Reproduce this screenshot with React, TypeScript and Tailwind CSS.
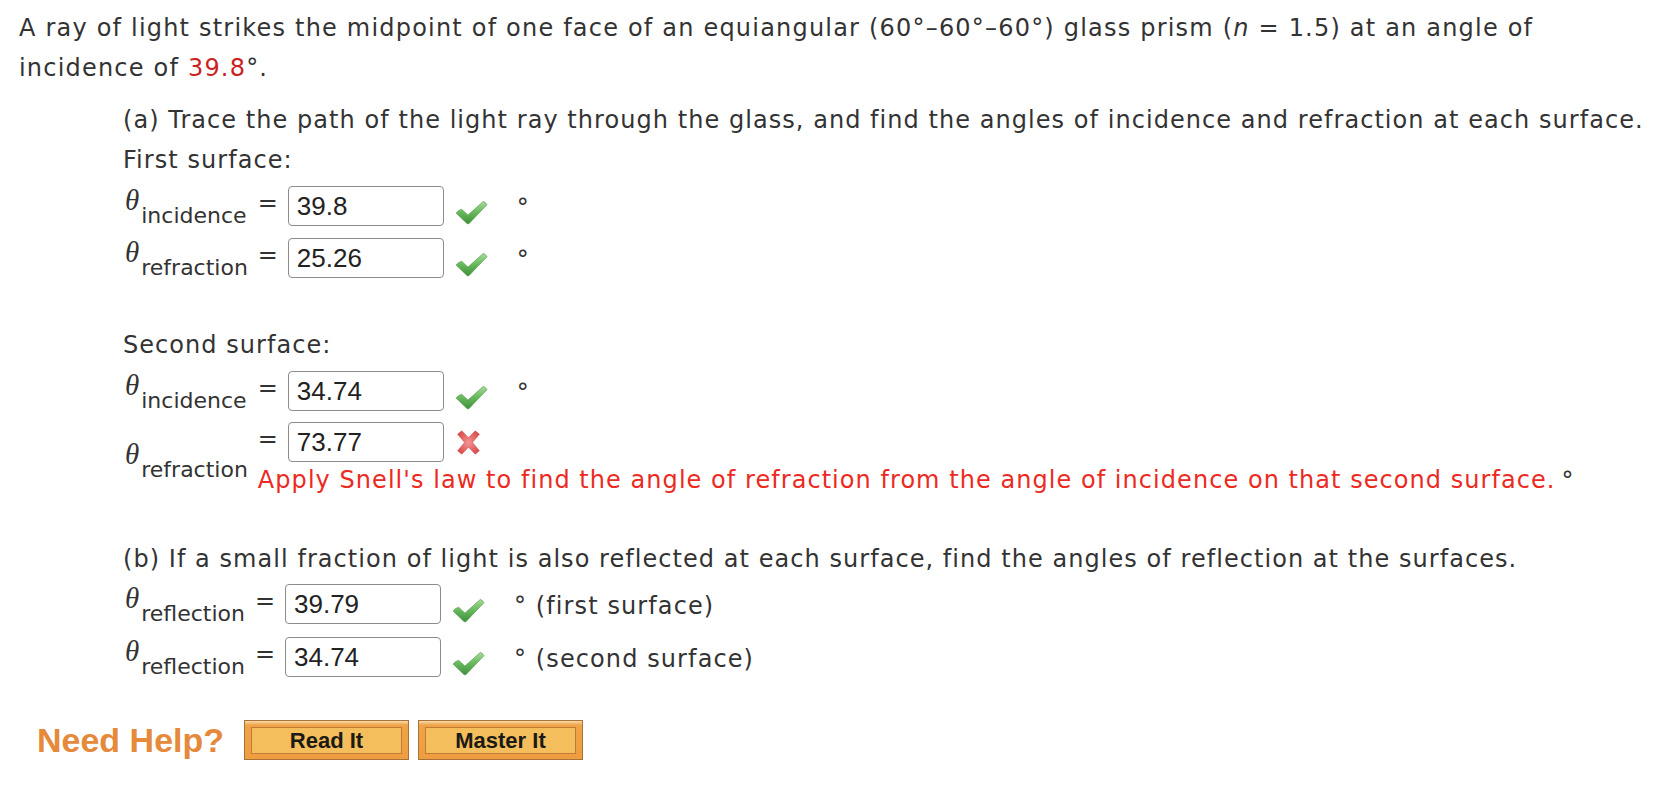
import React from "react";

const body = "font-['DejaVu_Sans',Verdana,sans-serif]";

function Check() {
  return (
    <svg width="33" height="25" viewBox="0 0 32 24" className="shrink-0">
      <defs>
        <linearGradient id="cg" x1="0" y1="0" x2="0" y2="1">
          <stop offset="0" stopColor="#a6dc98" />
          <stop offset="0.5" stopColor="#66b85c" />
          <stop offset="1" stopColor="#3f8f3a" />
        </linearGradient>
      </defs>
      <path d="M1 12.5 Q3.5 9.5 6.5 8.8 L12.5 14.5 L27.5 1.2 Q30 2.2 31 4.5 L13.5 22.8 Q12.5 23.4 11.5 22.6 Z" fill="url(#cg)" stroke="#5a9c52" strokeWidth="0.6" strokeLinejoin="round" />
    </svg>
  );
}

function Cross() {
  return (
    <svg width="27" height="25" viewBox="0 0 26 24" className="shrink-0">
      <defs>
        <radialGradient id="xg" cx="0.5" cy="0.5" r="0.6">
          <stop offset="0" stopColor="#f39494" />
          <stop offset="1" stopColor="#d94848" />
        </radialGradient>
      </defs>
      <path d="M2.5 4 L6.5 0.8 L13 7.5 L19.5 0.8 L23.5 4 L16.8 12 L23.5 20 L19.5 23.2 L13 16.5 L6.5 23.2 L2.5 20 L9.2 12 Z" fill="url(#xg)" stroke="#d65656" strokeWidth="0.6" strokeLinejoin="round" />
    </svg>
  );
}

function Label({ sub }: { sub: string }) {
  return (
    <div className="flex items-start text-[#333]">
      <span className="font-['Liberation_Serif',serif] italic text-[29px] leading-[28px]">θ</span>
      <span className={`${body} text-[22px] leading-[22px] mt-[19px] ml-[2px]`}>{sub}</span>
    </div>
  );
}

function Input({ value }: { value: string }) {
  return (
    <div className="w-[156px] h-[40px] border border-[#8c8c8c] rounded-[4px] flex items-center pl-[8px] font-['Liberation_Sans',Arial,sans-serif] text-[26px] text-[#222] bg-white shrink-0">
      {value}
    </div>
  );
}

function Eq() {
  return <span className={`${body} text-[24px] leading-[24px] text-[#333] w-[30px] shrink-0 relative -top-[3px]`}>=</span>;
}

function LineRow({ value, after, wrong }: { value: string; after?: string; wrong?: boolean }) {
  return (
    <div className="flex items-center h-[40px]">
      <Eq />
      <Input value={value} />
      <div className={`ml-[11px] w-[33px] flex items-center ${wrong ? "" : "relative top-[6px]"}`}>{wrong ? <Cross /> : <Check />}</div>
      {!wrong && (
        <span className={`${body} text-[24px] leading-[24px] tracking-[1.1px] text-[#333] ml-[29px] relative top-[2px] whitespace-pre`}>
          {"°" + (after ?? "")}
        </span>
      )}
    </div>
  );
}

function Btn({ children }: { children: React.ReactNode }) {
  return (
    <div className="w-[165px] h-[40px] border border-[#a8733a] bg-[linear-gradient(#f7dcb0_0px,#efa447_4px,#ee9d3f_100%)] px-[6px] pt-[6px] pb-[5px]">
      <div className="h-full border border-[#c07c36] bg-[#f3be5b] flex items-center justify-center font-['Liberation_Sans',Arial,sans-serif] font-bold text-[22px] text-[#1c1a14]">
        {children}
      </div>
    </div>
  );
}

export default function App() {
  return (
    <div className={`bg-white w-[1676px] h-[788px] ${body} text-[#333] text-[24px] leading-[40px] pt-[8px] pl-[19px]`}>
      <p className="tracking-[1.2px]">
        A ray of light strikes the midpoint of one face of an equiangular (60°–60°–60°) glass prism (<span className="italic">n</span> = 1.5) at an angle of
        <br />
        incidence of <span className="text-[#cc1f1f]">39.8</span>°.
      </p>
      <div className="pl-[104px]">
        <p className="mt-[12px] tracking-[1.05px]">(a) Trace the path of the light ray through the glass, and find the angles of incidence and refraction at each surface.</p>
        <p className="tracking-[1.05px]">First surface:</p>
        <div className="grid grid-cols-[auto_1fr] gap-x-[10px] gap-y-[11px] mt-[6px] ml-[2px]">
          <div className="self-center"><Label sub="incidence" /></div>
          <LineRow value="39.8" />
          <div className="self-center"><Label sub="refraction" /></div>
          <LineRow value="25.26" />
        </div>
        <p className="mt-[46px] tracking-[1.05px]">Second surface:</p>
        <div className="grid grid-cols-[auto_1fr] gap-x-[10px] gap-y-[10px] mt-[6px] ml-[2px]">
          <div className="self-center"><Label sub="incidence" /></div>
          <LineRow value="34.74" />
          <div className="self-center"><Label sub="refraction" /></div>
          <div className="flex flex-col">
            <LineRow value="73.77" wrong />
            <div className="text-[24px] leading-[36px] tracking-[1.05px] whitespace-nowrap">
              <span className="text-[#ec2a22]">Apply Snell's law to find the angle of refraction from the angle of incidence on that second surface.</span>
              <span className="ml-[6px] relative top-[1px]">°</span>
            </div>
          </div>
        </div>
        <p className="mt-[41px] tracking-[1.05px]">(b) If a small fraction of light is also reflected at each surface, find the angles of reflection at the surfaces.</p>
        <div className="grid grid-cols-[auto_1fr] gap-x-[10px] gap-y-[12px] mt-[5px] ml-[2px]">
          <div className="self-center"><Label sub="reflection" /></div>
          <LineRow value="39.79" after=" (first surface)" />
          <div className="self-center"><Label sub="reflection" /></div>
          <LineRow value="34.74" after=" (second surface)" />
        </div>
      </div>
      <div className="flex items-center mt-[42px] pl-[18px]">
        <span className="font-['Liberation_Sans',Arial,sans-serif] font-bold text-[34px] leading-[40px] text-[#e5893a] w-[207px]">Need Help?</span>
        <Btn>Read It</Btn>
        <div className="w-[9px]" />
        <Btn>Master It</Btn>
      </div>
    </div>
  );
}
